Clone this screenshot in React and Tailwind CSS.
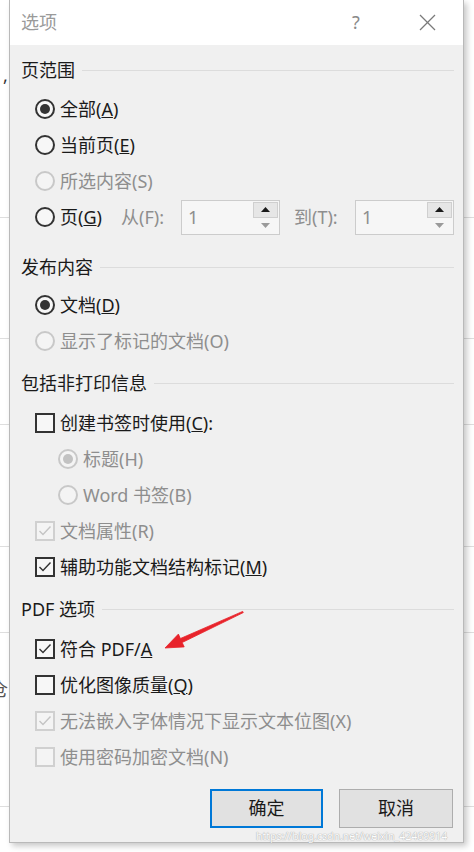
import React from "react";

const FONT = "font-['Noto_Sans','Noto_Sans_CJK_SC',sans-serif]";

function Radio({ checked, disabled }) {
  return (
    <span
      className={
        "flex h-[20px] w-[20px] shrink-0 items-center justify-center rounded-full border-2 " +
        (disabled ? "border-[#c8c8c8] bg-[#f4f4f4]" : "border-[#333333] bg-[#f7f7f7]")
      }
    >
      {checked && (
        <span
          className={
            "h-[10px] w-[10px] rounded-full " + (disabled ? "bg-[#c2c2c2]" : "bg-[#333333]")
          }
        />
      )}
    </span>
  );
}

function Checkbox({ checked, disabled }) {
  return (
    <span
      className={
        "flex h-[20px] w-[20px] shrink-0 items-center justify-center border-2 " +
        (disabled ? "border-[#d0d0d0] bg-[#f4f4f4]" : "border-[#333333] bg-[#f7f7f7]")
      }
    >
      {checked && (
        <svg width="16" height="16" viewBox="0 0 16 16">
          <polyline
            points="2.5,8 6,11.5 13.5,3.5"
            fill="none"
            stroke={disabled ? "#c4c4c4" : "#333333"}
            strokeWidth="1.4"
          />
        </svg>
      )}
    </span>
  );
}

function Heading({ children }) {
  return (
    <div className="flex h-[36px] items-center pl-[11px] pr-[9px]">
      <span className="text-[18px] text-[#1a1a1a]">{children}</span>
      <span className="ml-[7px] h-px flex-1 bg-[#dcdcdc]" />
    </div>
  );
}

function Row({ indent, disabled, control, children }) {
  return (
    <div
      className={
        "flex h-[36px] items-center gap-[5px] " + (indent ? "pl-[48px]" : "pl-[25px]")
      }
    >
      {control}
      <span className={"text-[18px] " + (disabled ? "text-[#8e8e8e]" : "text-[#1a1a1a]")}>
        {children}
      </span>
    </div>
  );
}

function Spin() {
  return (
    <div className="flex h-[35px] w-[99px] border border-[#cccccc] bg-[#f6f6f6]">
      <div className="flex flex-1 items-center pl-[6px] text-[18px] text-[#8e8e8e]">1</div>
      <div className="mr-[1px] mt-[1px] flex w-[25px] flex-col">
        <div className="flex h-[16px] items-center justify-center border border-[#cfcfcf] bg-[#e6e6e6]">
          <svg width="9" height="5" viewBox="0 0 9 5">
            <polygon points="0,5 4.5,0 9,5" fill="#1a1a1a" />
          </svg>
        </div>
        <div className="flex h-[16px] items-center justify-center">
          <svg width="9" height="5" viewBox="0 0 9 5">
            <polygon points="0,0 9,0 4.5,5" fill="#9a9a9a" />
          </svg>
        </div>
      </div>
    </div>
  );
}

export default function App() {
  return (
    <div className={"relative h-[852px] w-[474px] overflow-hidden bg-white " + FONT}>
      {/* backdrop document */}
      <div className="flex flex-col">
        <div className="h-[218px] border-b border-[#dedede]" />
        <div className="h-[121px] border-b border-[#dedede]" />
        <div className="h-[86px] border-b border-[#dedede]" />
        <div className="h-[122px] border-b border-[#dedede]" />
        <div className="h-[86px] border-b border-[#dedede]" />
        <div className="h-[174px] border-b border-[#dedede]" />
      </div>
      <span className="absolute left-[3px] top-[62px] text-[18px] text-[#333]">,</span>
      <span className="absolute left-[-10px] top-[676px] text-[18px] text-[#555]">仓</span>

      {/* dialog */}
      <div className="absolute left-[9px] top-0 flex h-[843px] w-[455px] flex-col border-x border-b border-[#b9b9b9] bg-[#f0f0f0] shadow-[3px_3px_6px_rgba(0,0,0,0.22)]">
        <div className="flex h-[45px] items-center bg-white pl-[11px] pr-[13px]">
          <span className="text-[18px] text-[#9a9a9a]">选项</span>
          <span className="ml-auto flex w-[46px] justify-center text-[18px] text-[#8a8a8a]">?</span>
          <span className="w-[25px]" />
          <span className="flex w-[46px] justify-center">
            <svg width="17" height="17" viewBox="0 0 17 17">
              <line x1="1" y1="1" x2="16" y2="16" stroke="#7a7a7a" strokeWidth="1.2" />
              <line x1="16" y1="1" x2="1" y2="16" stroke="#7a7a7a" strokeWidth="1.2" />
            </svg>
          </span>
        </div>

        <div className="flex flex-col pt-[7px]">
          <Heading>页范围</Heading>
          <div className="mt-[3px]">
            <Row control={<Radio checked />}>
              全部(<u>A</u>)
            </Row>
            <Row control={<Radio />}>
              当前页(<u>E</u>)
            </Row>
            <Row disabled control={<Radio disabled />}>
              所选内容(S)
            </Row>
            <div className="flex h-[36px] items-center pl-[25px]">
              <Radio />
              <span className="ml-[5px] w-[44px] text-[18px] text-[#1a1a1a]">
                页(<u>G</u>)
              </span>
              <span className="ml-[17px] w-[60px] text-[18px] text-[#8e8e8e]">从(F):</span>
              <Spin />
              <span className="ml-[14px] w-[61px] text-[18px] text-[#8e8e8e]">到(T):</span>
              <Spin />
            </div>
          </div>

          <div className="mt-[14px]">
            <Heading>发布内容</Heading>
          </div>
          <div className="mt-[2px]">
            <Row control={<Radio checked />}>
              文档(<u>D</u>)
            </Row>
            <Row disabled control={<Radio disabled />}>
              显示了标记的文档(O)
            </Row>
          </div>

          <div className="mt-[6px]">
            <Heading>包括非打印信息</Heading>
          </div>
          <div className="mt-[4px]">
            <Row control={<Checkbox />}>
              创建书签时使用(<u>C</u>):
            </Row>
            <Row indent disabled control={<Radio checked disabled />}>
              标题(H)
            </Row>
            <Row indent disabled control={<Radio disabled />}>
              Word 书签(B)
            </Row>
            <Row disabled control={<Checkbox checked disabled />}>
              文档属性(R)
            </Row>
            <Row control={<Checkbox checked />}>
              辅助功能文档结构标记(<u>M</u>)
            </Row>
          </div>

          <div className="mt-[6px]">
            <Heading>PDF 选项</Heading>
          </div>
          <div className="mt-[4px]">
            <Row control={<Checkbox checked />}>
              符合 PDF/<u>A</u>
            </Row>
            <Row control={<Checkbox />}>
              优化图像质量(<u>Q</u>)
            </Row>
            <Row disabled control={<Checkbox checked disabled />}>
              无法嵌入字体情况下显示文本位图(X)
            </Row>
            <Row disabled control={<Checkbox disabled />}>
              使用密码加密文档(N)
            </Row>
          </div>

          <div className="mt-[14px] flex justify-end gap-[16px] pr-[10px]">
            <button className="flex h-[39px] w-[113px] items-center justify-center border-2 border-[#0078d7] bg-[#e1e1e1] text-[18px] text-[#1a1a1a]">
              确定
            </button>
            <button className="flex h-[39px] w-[114px] items-center justify-center border border-[#adadad] bg-[#e1e1e1] text-[18px] text-[#1a1a1a]">
              取消
            </button>
          </div>
        </div>
      </div>

      {/* annotation arrow */}
      <svg className="pointer-events-none absolute left-0 top-0" width="474" height="852" viewBox="0 0 474 852">
        <polygon
          points="242.7,611.4 180.4,638.5 178.4,634.1 165,648 184.2,646.9 182.2,642.5 243.3,612.6"
          fill="#e8232b"
          stroke="#e8232b"
          strokeWidth="0.8"
          strokeLinejoin="round"
        />
      </svg>

      {/* watermark */}
      <span className="absolute left-[256px] top-[829px] whitespace-nowrap text-[10.5px] text-white opacity-80 [text-shadow:0_0_1px_#9a9a9a,0_0_1px_#9a9a9a]">
        https://blog.csdn.net/weixin_42469914
      </span>
    </div>
  );
}
